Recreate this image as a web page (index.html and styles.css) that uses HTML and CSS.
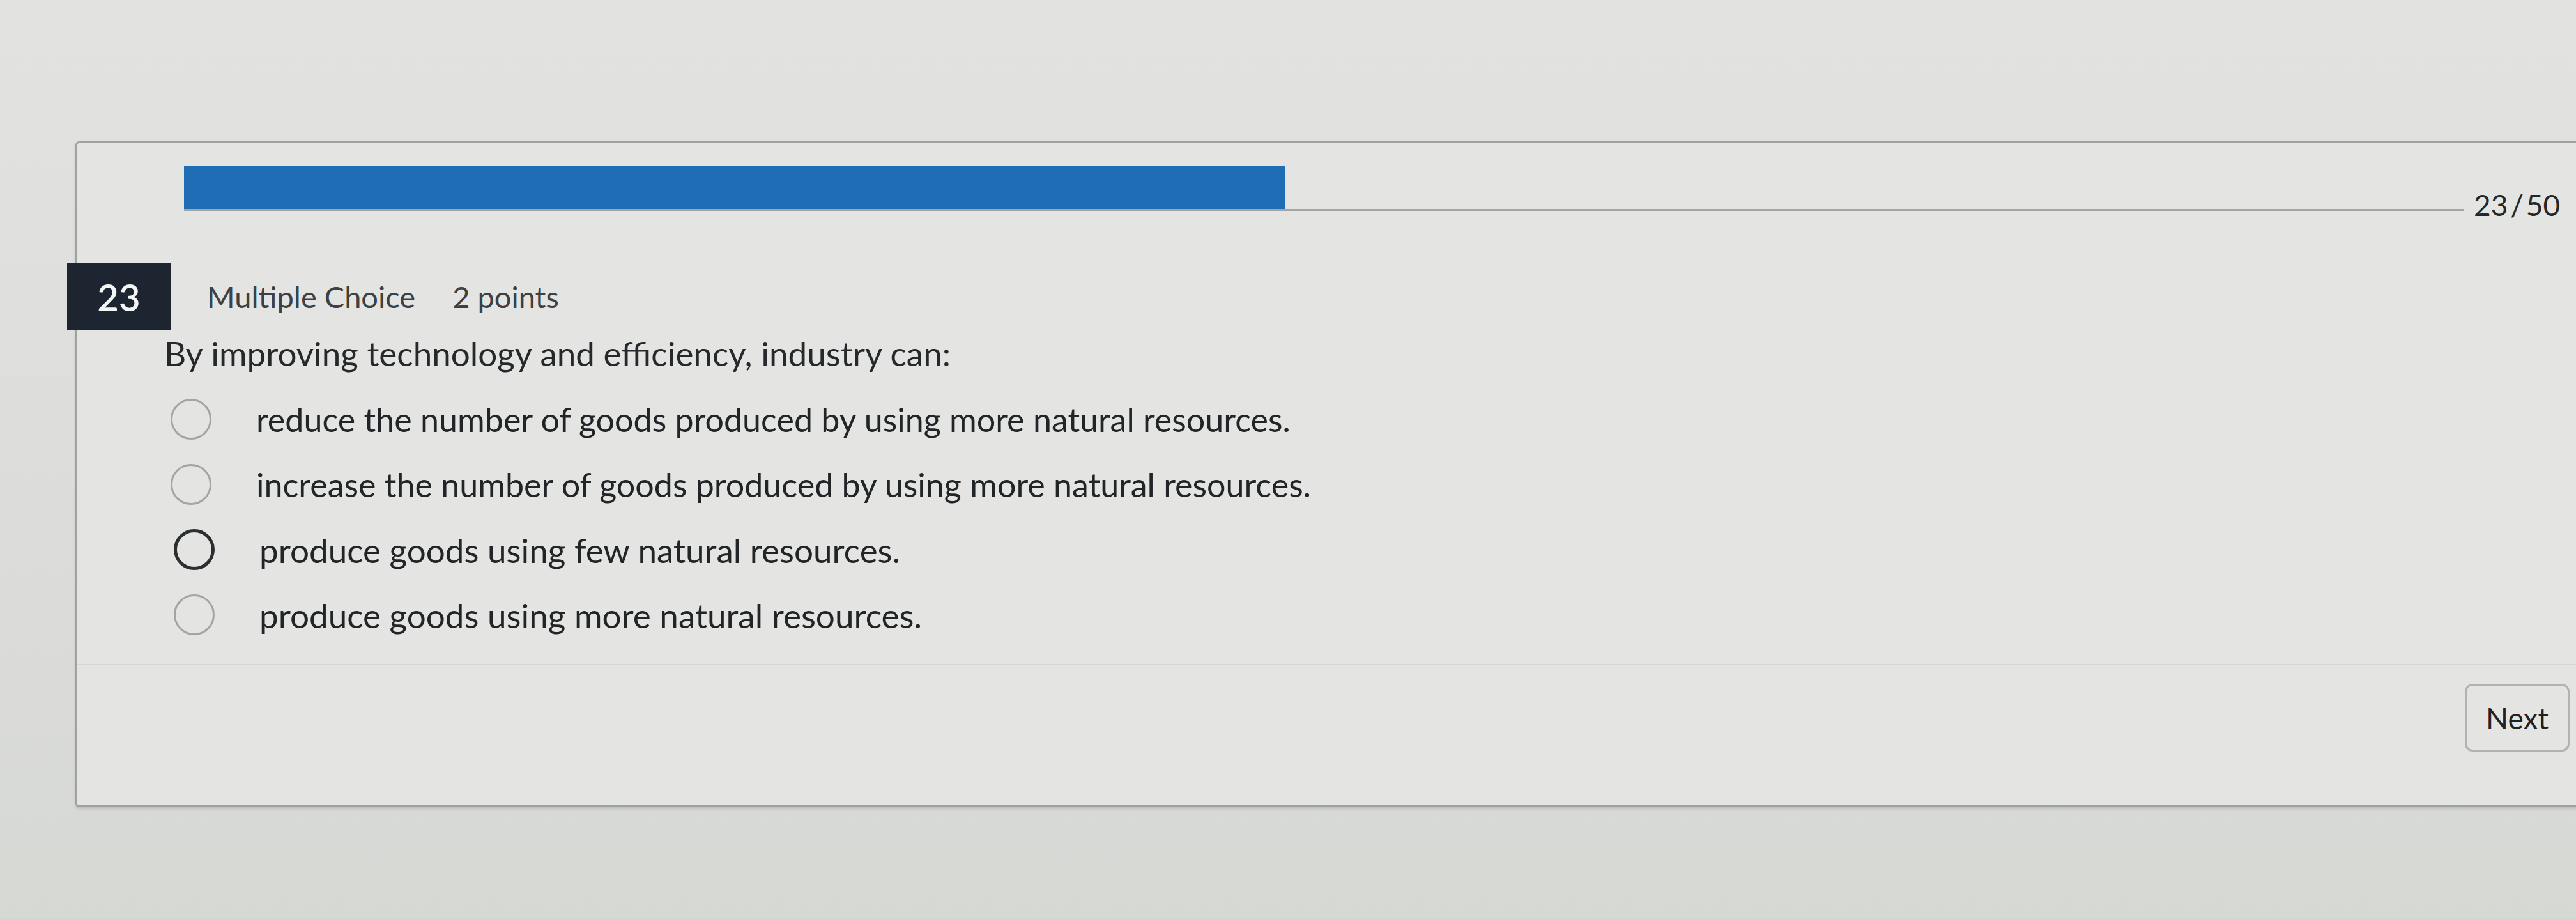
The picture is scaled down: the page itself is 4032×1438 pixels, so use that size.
FILE: index.html
```html
<!DOCTYPE html>
<html lang="en">
<head>
<meta charset="utf-8">
<title>Quiz question 23</title>
<link rel="stylesheet" href="styles.css">
</head>
<body>
<div class="page">
  <section class="card">
    <div class="progress-row">
      <div class="track"><div class="fill" style="width:48.3%"></div></div>
      <span class="counter">23 / 50</span>
    </div>
    <div class="q-header">
      <span class="badge">23</span>
      <span class="qtype">Multiple Choice</span>
      <span class="qpoints">2 points</span>
    </div>
    <p class="prompt">By improving technology and efficiency, industry can:</p>
    <ul class="options">
      <li class="option"><span class="radio"></span><span class="label">reduce the number of goods produced by using more natural resources.</span></li>
      <li class="option"><span class="radio"></span><span class="label">increase the number of goods produced by using more natural resources.</span></li>
      <li class="option option-low"><span class="radio radio-dark"></span><span class="label">produce goods using few natural resources.</span></li>
      <li class="option option-low"><span class="radio"></span><span class="label">produce goods using more natural resources.</span></li>
    </ul>
    <div class="footer">
      <button class="next" type="button">Next</button>
    </div>
  </section>
</div>
</body>
</html>
```
FILE: styles.css
```css
html, body {
  margin: 0;
  padding: 0;
}
body {
  width: 4032px;
  height: 1438px;
  overflow: hidden;
  background: linear-gradient(180deg, #e2e3e1 0%, #dcdddb 60%, #d6d8d4 100%);
  font-family: Lato, "Open Sans", sans-serif;
  color: #2b2e31;
}
.page {
  padding-top: 221px;
  padding-left: 118px;
}
.card {
  box-sizing: border-box;
  width: 3960px;
  height: 1042px;
  background: #e4e5e2;
  border: 3px solid #a0a29f;
  border-radius: 6px;
  box-shadow: 0 3px 4px rgba(0,0,0,0.12);
  display: flex;
  flex-direction: column;
}
.progress-row {
  display: flex;
  align-items: flex-end;
  margin-top: 36px;
  margin-left: 167px;
  height: 70px;
}
.track {
  width: 3569px;
  height: 67px;
  border-bottom: 3px solid #a3a5a2;
}
.fill {
  height: 100%;
  background: #1f6db5;
}
.counter {
  margin-left: 15px;
  margin-bottom: -18px;
  font-size: 46px;
  word-spacing: -8px;
  color: #24272a;
  white-space: nowrap;
}
.q-header {
  display: flex;
  align-items: center;
  margin-top: 81px;
  margin-left: -16px;
}
.badge {
  width: 162px;
  height: 106px;
  background: #1c2530;
  color: #f4f5f5;
  font-size: 58px;
  font-weight: 600;
  display: flex;
  align-items: center;
  justify-content: center;
}
.qtype {
  margin-left: 57px;
  font-size: 47px;
  color: #3d4145;
}
.qpoints {
  margin-left: 58px;
  font-size: 47px;
  color: #3d4145;
}
.prompt {
  margin: 3px 0 0 136px;
  font-size: 53px;
  line-height: 65px;
  color: #26292c;
}
.options {
  list-style: none;
  margin: 20px 0 0 146px;
  padding: 0;
}
.option {
  display: flex;
  align-items: center;
  height: 102px;
}
.option-low {
  padding-left: 5px;
}
.radio {
  box-sizing: border-box;
  width: 64px;
  height: 64px;
  border: 3px solid #a3a5a2;
  border-radius: 50%;
  flex: none;
}
.radio-dark {
  border: 5px solid #2c2f31;
}
.label {
  margin-left: 70px;
  font-size: 52px;
  color: #222528;
  white-space: nowrap;
}
.option-low .label {
  font-size: 53px;
}
.footer {
  margin-top: 26px;
  border-top: 2px solid #d4d6d2;
  display: flex;
  justify-content: flex-end;
  padding: 29px 53px 0 0;
}
.next {
  box-sizing: border-box;
  width: 164px;
  height: 106px;
  border: 3px solid #b1b3b0;
  border-radius: 12px;
  background: #e4e5e2;
  font-family: Lato, "Open Sans", sans-serif;
  font-size: 46px;
  color: #1f2225;
  padding: 0;
}
```
